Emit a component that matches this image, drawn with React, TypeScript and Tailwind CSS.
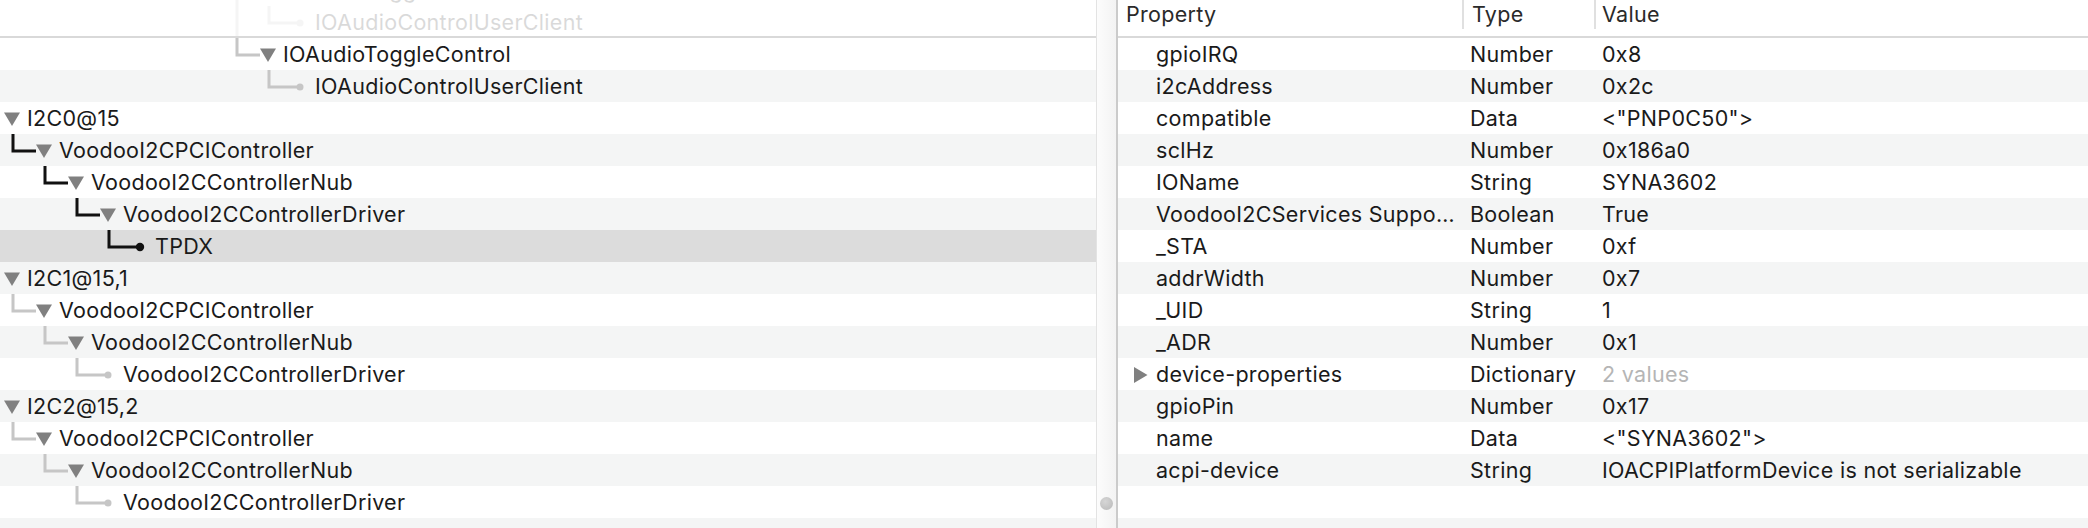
import React from "react";

type Node = {
  label: string;
  level: number;
  kids: boolean;
  dark?: boolean;
  selected?: boolean;
  cont?: number[];
};

const HEADER_ROWS: Node[] = [
  { label: "IOAudioToggleControl", level: 8, kids: true, cont: [237] },
  { label: "IOAudioControlUserClient", level: 9, kids: false, cont: [237] },
];

const TREE: Node[] = [
  { label: "IOAudioToggleControl", level: 8, kids: true },
  { label: "IOAudioControlUserClient", level: 9, kids: false },
  { label: "I2C0@15", level: 0, kids: true },
  { label: "VoodooI2CPCIController", level: 1, kids: true, dark: true },
  { label: "VoodooI2CControllerNub", level: 2, kids: true, dark: true },
  { label: "VoodooI2CControllerDriver", level: 3, kids: true, dark: true },
  { label: "TPDX", level: 4, kids: false, dark: true, selected: true },
  { label: "I2C1@15,1", level: 0, kids: true },
  { label: "VoodooI2CPCIController", level: 1, kids: true },
  { label: "VoodooI2CControllerNub", level: 2, kids: true },
  { label: "VoodooI2CControllerDriver", level: 3, kids: false },
  { label: "I2C2@15,2", level: 0, kids: true },
  { label: "VoodooI2CPCIController", level: 1, kids: true },
  { label: "VoodooI2CControllerNub", level: 2, kids: true },
  { label: "VoodooI2CControllerDriver", level: 3, kids: false },
];

type Prop = { name: string; type: string; value: string; expandable?: boolean; muted?: boolean };

const PROPS: Prop[] = [
  { name: "gpioIRQ", type: "Number", value: "0x8" },
  { name: "i2cAddress", type: "Number", value: "0x2c" },
  { name: "compatible", type: "Data", value: '<"PNP0C50">' },
  { name: "sclHz", type: "Number", value: "0x186a0" },
  { name: "IOName", type: "String", value: "SYNA3602" },
  { name: "VoodooI2CServices Suppo…", type: "Boolean", value: "True" },
  { name: "_STA", type: "Number", value: "0xf" },
  { name: "addrWidth", type: "Number", value: "0x7" },
  { name: "_UID", type: "String", value: "1" },
  { name: "_ADR", type: "Number", value: "0x1" },
  { name: "device-properties", type: "Dictionary", value: "2 values", expandable: true, muted: true },
  { name: "gpioPin", type: "Number", value: "0x17" },
  { name: "name", type: "Data", value: '<"SYNA3602">' },
  { name: "acpi-device", type: "String", value: "IOACPIPlatformDevice is not serializable" },
];

function TreeGlyphs({ node }: { node: Node }) {
  const textX = 27 + 32 * node.level;
  const vx = textX - 46;
  const color = node.dark ? "#111111" : "#c6c6c6";
  const end = node.kids ? textX - 23 : textX - 16;
  const y = 17;
  return (
    <svg width={textX} height={32} className="shrink-0">
      {(node.cont || []).map((cx) => (
        <line key={cx} x1={cx} y1={0} x2={cx} y2={32} stroke="#c6c6c6" strokeWidth={3} />
      ))}
      {node.level > 0 && (
        <path d={`M ${vx} 0 V ${y} H ${end}`} fill="none" stroke={color} strokeWidth={3} strokeLinejoin="miter" />
      )}
      {!node.kids && node.level > 0 && (
        <circle cx={textX - 15} cy={y} r={node.dark ? 4.2 : 3.5} fill={color} />
      )}
      {node.kids && (
        <polygon points={`${textX - 23},10.5 ${textX - 7},10.5 ${textX - 15},24`} fill="#808080" />
      )}
    </svg>
  );
}

function TreeRow({ node, striped }: { node: Node; striped: boolean }) {
  const bg = node.selected ? "bg-[#dcdcdc]" : striped ? "bg-[#f4f5f5]" : "bg-white";
  return (
    <div className={`flex h-[32px] shrink-0 items-center ${bg}`}>
      <TreeGlyphs node={node} />
      <span className="whitespace-nowrap text-[#1a1a1a]">{node.label}</span>
    </div>
  );
}

function PropRow({ p, striped }: { p: Prop; striped: boolean }) {
  return (
    <div className={`grid h-[32px] shrink-0 grid-cols-[344px_132px_1fr] items-center ${striped ? "bg-[#f4f5f5]" : "bg-white"}`}>
      <div className="flex items-center overflow-hidden">
        <svg width={38} height={32} className="shrink-0">
          {p.expandable && <polygon points="16,9 16,25 29.5,17" fill="#808080" />}
        </svg>
        <span className="whitespace-nowrap text-[#1a1a1a]">{p.name}</span>
      </div>
      <div className="whitespace-nowrap pl-[8px] text-[#1a1a1a]">{p.type}</div>
      <div className={`whitespace-nowrap pl-[8px] ${p.muted ? "text-[#b5b5b5]" : "text-[#1a1a1a]"}`}>{p.value}</div>
    </div>
  );
}

export default function App() {
  return (
    <div className="flex h-[528px] w-[2088px] overflow-hidden bg-white font-['Inter',sans-serif] text-[21.5px] leading-[32px] tracking-[0.3px] antialiased">
      {/* Left: registry tree */}
      <div className="flex w-[1096px] shrink-0 flex-col overflow-hidden">
        <div className="h-[36px] shrink-0 overflow-hidden bg-white">
          <div className="-mt-[26px] opacity-[0.16]">
            {HEADER_ROWS.map((n, i) => (
              <TreeRow key={i} node={n} striped={false} />
            ))}
          </div>
        </div>
        <div className="h-[2px] shrink-0 bg-[#d9d9d9]" />
        <div className="flex shrink-0 flex-col">
          {TREE.map((n, i) => (
            <TreeRow key={i} node={n} striped={i % 2 === 1} />
          ))}
          <div className="h-[32px] shrink-0 bg-[#f4f5f5]" />
        </div>
      </div>

      {/* Splitter */}
      <div className="flex w-[22px] shrink-0 flex-col items-center justify-end border-l border-r-2 border-l-[#e3e3e3] border-r-[#cbcbcb] bg-gradient-to-r from-[#fcfcfc] to-[#f3f3f3] pb-[18px]">
        <div className="h-[13px] w-[13px] rounded-full bg-[radial-gradient(circle_at_40%_35%,#d6d6d6,#b8b8b8)]" />
      </div>

      {/* Right: properties */}
      <div className="flex min-w-0 flex-1 flex-col overflow-hidden">
        <div className="grid h-[36px] shrink-0 grid-cols-[344px_132px_1fr] items-start text-[#2a2a2a]">
          <div className="pl-[8px] leading-[28px]">Property</div>
          <div className="flex h-[29px] items-start">
            <div className="h-[29px] w-[2px] bg-[#e0e0e0]" />
            <span className="pl-[8px] leading-[28px]">Type</span>
          </div>
          <div className="flex h-[29px] items-start">
            <div className="h-[29px] w-[2px] bg-[#e0e0e0]" />
            <span className="pl-[6px] leading-[28px]">Value</span>
          </div>
        </div>
        <div className="h-[2px] shrink-0 bg-[#d9d9d9]" />
        <div className="flex shrink-0 flex-col">
          {PROPS.map((p, i) => (
            <PropRow key={i} p={p} striped={i % 2 === 1} />
          ))}
          <div className="h-[32px] shrink-0 bg-white" />
          <div className="h-[32px] shrink-0 bg-[#f4f5f5]" />
        </div>
      </div>
    </div>
  );
}
